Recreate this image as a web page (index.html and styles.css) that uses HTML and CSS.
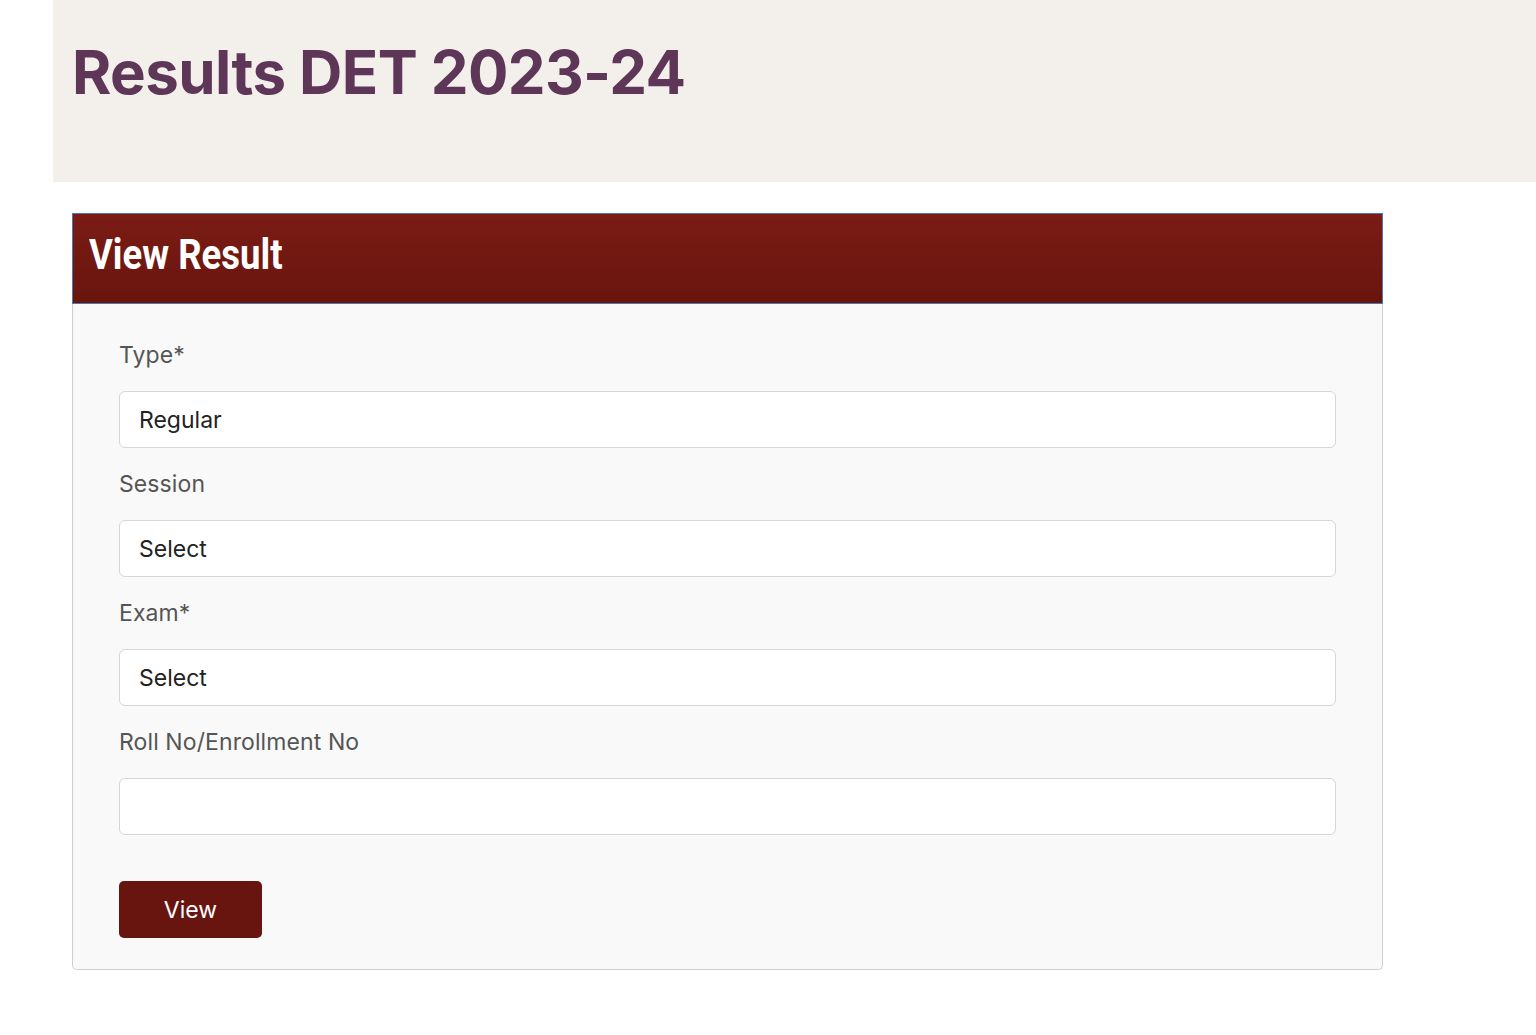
FILE: index.html
```html
<!DOCTYPE html>
<html lang="en">
<head>
<meta charset="utf-8">
<title>Results DET 2023-24</title>
<link rel="stylesheet" href="styles.css">
</head>
<body>
<div class="page">
  <header class="banner">
    <h1 class="title">Results DET 2023-24</h1>
  </header>
  <section class="card">
    <div class="card-head">
      <h2 class="card-title">View Result</h2>
    </div>
    <form class="card-body">
      <label class="label">Type*</label>
      <div class="field">Regular</div>
      <label class="label">Session</label>
      <div class="field">Select</div>
      <label class="label">Exam*</label>
      <div class="field">Select</div>
      <label class="label">Roll No/Enrollment No</label>
      <div class="field"></div>
      <button type="button" class="btn">View</button>
    </form>
  </section>
</div>
</body>
</html>
```

FILE: styles.css
```css
html, body {
  margin: 0;
  padding: 0;
  background: #ffffff;
}
body {
  font-family: Inter, "Liberation Sans", Arial, sans-serif;
}
.page {
  padding-left: 53px;
}
.banner {
  background: #f3f0ec;
  height: 182px;
  box-sizing: border-box;
  padding: 39px 0 0 19px;
}
.title {
  margin: 0;
  font-family: Inter, "Liberation Sans", Arial, sans-serif;
  font-weight: 700;
  font-size: 60px;
  line-height: 66px;
  color: #5e3657;
  letter-spacing: -0.6px;
}
.card {
  margin: 31px 0 0 19px;
  width: 1311px;
  box-sizing: border-box;
  border-radius: 0 0 5px 5px;
  background: #f9f9f9;
  border: 1px solid #cfcfcf;
  border-top: none;
  padding-bottom: 31px;
}
.card-head {
  height: 91px;
  box-sizing: border-box;
  margin: 0 -1px;
  background: linear-gradient(#7b1c15, #68150e);
  border: 1px solid #4a78b2;
  display: flex;
  align-items: center;
  padding: 0 0 8px 16px;
}
.card-title {
  margin: 0;
  font-family: Roboto, "Liberation Sans", Arial, sans-serif;
  font-weight: 700;
  font-size: 42px;
  line-height: 48px;
  color: #ffffff;
  transform: scaleX(0.87);
  transform-origin: left center;
}
.card-body {
  display: flex;
  flex-direction: column;
  padding: 37px 46px 0 46px;
}
.label {
  font-size: 23px;
  line-height: 28px;
  color: #555555;
  margin-bottom: 22px;
  letter-spacing: 0.1px;
}
.field {
  height: 57px;
  box-sizing: border-box;
  border: 1.5px solid #d3d6da;
  border-radius: 6px;
  background: #ffffff;
  padding: 0 19px;
  display: flex;
  align-items: center;
  font-size: 23px;
  color: #222222;
  margin-bottom: 22px;
}
.btn {
  align-self: flex-start;
  margin-top: 24px;
  width: 143px;
  height: 57px;
  border: none;
  border-radius: 5px;
  background: #69150f;
  color: #ffffff;
  font-family: Inter, "Liberation Sans", Arial, sans-serif;
  font-size: 23px;
}
```
